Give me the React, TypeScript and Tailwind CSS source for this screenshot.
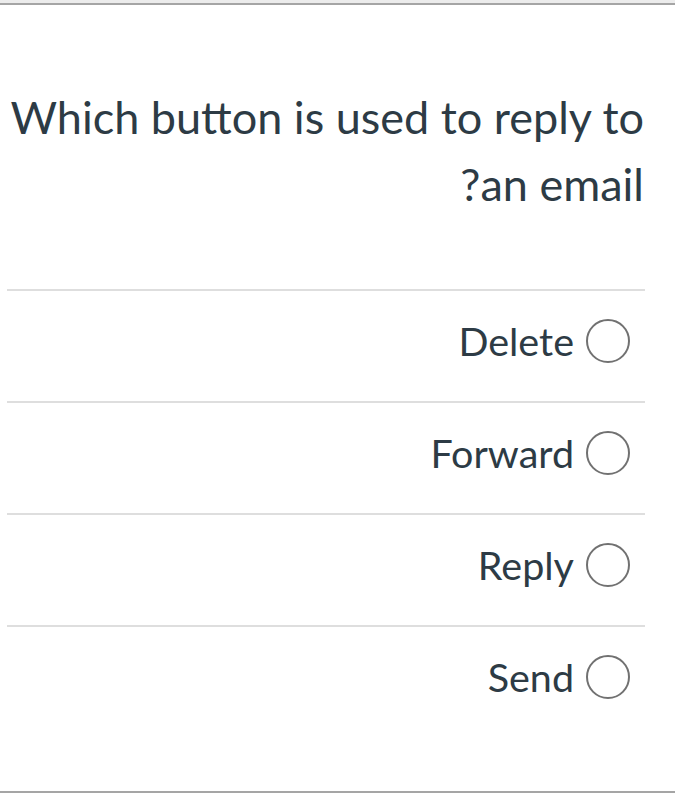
const OPTIONS = ["Delete", "Forward", "Reply", "Send"];

export default function App() {
  return (
    <div
      dir="rtl"
      className="min-h-[810px] w-[675px] bg-white text-[#2d3b45]"
      style={{ fontFamily: "Lato, 'Noto Sans', sans-serif" }}
    >
      <div className="h-[3px] bg-[#ececec]" />
      <div className="h-[2px] bg-[#a5a5a5]" />

      <div className="pl-[8px] pr-[31px] pt-[79px] pb-[71px] text-[45px] leading-[67px]">
        Which button is used to reply to an email?
      </div>

      <div className="mr-[30px] ml-[7px]">
        {OPTIONS.map((label) => (
          <div key={label} className="flex h-[112px] items-center gap-[12px] border-t-2 border-[#dedede] pb-[11px] pr-[15px]">
            <span className="h-[44px] w-[44px] shrink-0 rounded-full border-[2.5px] border-[#717171]" />
            <span className="text-[39.5px] leading-none">{label}</span>
          </div>
        ))}
      </div>

      <div className="mt-[54px] h-[2px] bg-[#a5a5a5]" />
    </div>
  );
}
